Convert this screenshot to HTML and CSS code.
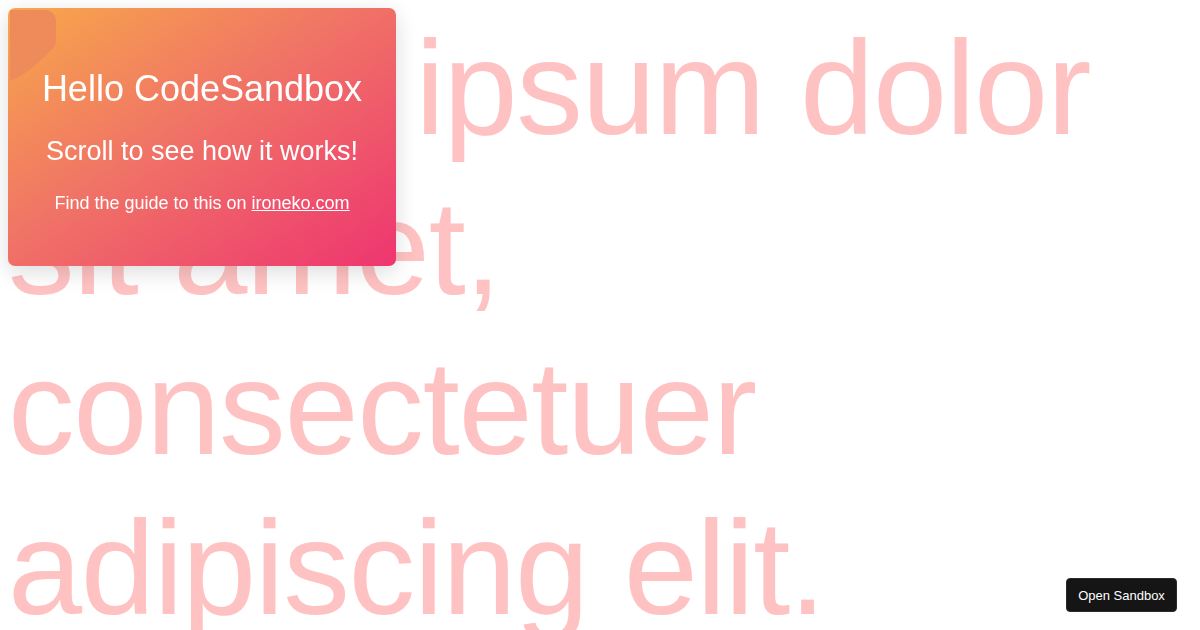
FILE: index.html
```html
<!DOCTYPE html>
<html lang="en">
<head>
<meta charset="utf-8">
<title>Hello CodeSandbox</title>
<link rel="stylesheet" href="styles.css">
</head>
<body>
  <p class="lorem">Lorem ipsum dolor sit amet, consectetuer adipiscing elit.</p>
  <div class="card">
    <svg class="blob" width="50" height="75" viewBox="0 0 50 75" aria-hidden="true">
      <path d="M1 1 L38 1 Q46 3 47 11 L47 34 Q45 40 41 42 L35 48 Q30 53 24 58 Q18 63 13 66 Q7 70 3 71 L1 71 Z" fill="#ef8a5b"/>
    </svg>
    <h1 class="title">Hello CodeSandbox</h1>
    <p class="sub">Scroll to see how it works!</p>
    <p class="guide">Find the guide to this on <a class="link" href="#">ironeko.com</a></p>
  </div>
  <a class="open" href="#">Open Sandbox</a>
</body>
</html>
```

FILE: styles.css
```css
html, body {
  margin: 0;
  padding: 0;
  background: #ffffff;
  overflow: hidden;
}
body {
  margin: 8px;
  font-family: "Liberation Sans", Arial, sans-serif;
}
.lorem {
  margin: 0;
  font-size: 133.33px;
  line-height: 160px;
  letter-spacing: -1.3px;
  color: #ffc2c2;
}
.card {
  position: fixed;
  top: 8px;
  left: 8px;
  width: 388px;
  height: 258px;
  box-sizing: border-box;
  padding-top: 60px;
  border-radius: 7px;
  background: linear-gradient(to bottom right, #f8a84a 0%, #f07466 45%, #ee3570 100%);
  box-shadow: 0 6px 22px rgba(0, 0, 0, 0.14);
  color: #ffffff;
  text-align: center;
}
.blob {
  position: absolute;
  top: 1px;
  left: 1px;
}
.title {
  position: relative;
  margin: 0 0 26px;
  font-size: 36px;
  font-weight: normal;
  line-height: 41px;
}
.sub {
  margin: 0 0 26px;
  font-size: 27px;
  line-height: 32px;
}
.guide {
  margin: 0;
  font-size: 18px;
  line-height: 21px;
}
.link {
  color: #ffffff;
  text-decoration: underline;
}
.open {
  position: fixed;
  right: 23px;
  bottom: 18px;
  width: 111px;
  height: 34px;
  box-sizing: border-box;
  display: flex;
  align-items: center;
  justify-content: center;
  background: #151515;
  border: 1px solid #2a2a2a;
  border-radius: 4px;
  color: #ffffff;
  font-size: 13px;
  text-decoration: none;
}
```
